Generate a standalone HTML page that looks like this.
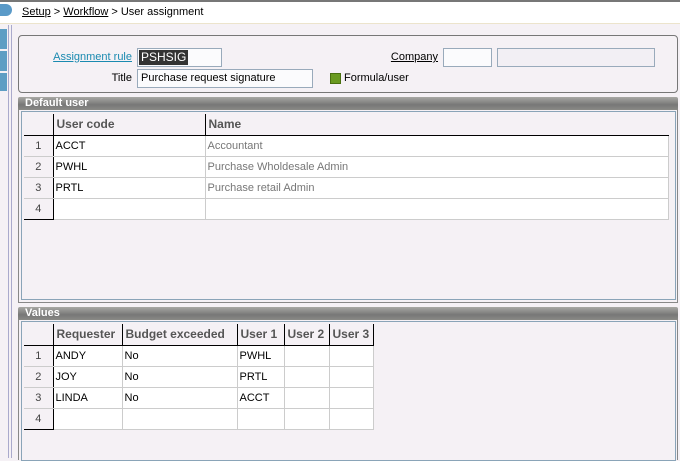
<!DOCTYPE html>
<html><head><style>
*{margin:0;padding:0;box-sizing:border-box}
body{width:680px;height:458px;overflow:hidden;background:#f5f1f5;font-family:"Liberation Sans",sans-serif;font-size:11px;color:#000;position:relative}
.a{position:absolute}
.top{left:0;top:0;width:680px;height:24px;background:#fff;border-top:2px solid #777;border-bottom:1px solid #ece4cc}
.u{text-decoration:underline}
.inp{position:absolute;background:#fbfbfd;border:1px solid #9ab;height:19px}
.bar{position:absolute;left:18px;width:660px;height:13px;background:linear-gradient(#a8a8a4,#777 60%,#8a8a86);color:#fff;font-weight:bold;font-size:11px;line-height:13px;padding-left:7px;border-radius:2px 2px 0 0}
.panel{position:absolute;left:18px;width:660px;border:1px solid #888;border-top:none}
.inner{position:absolute;border:1px solid #8aa4b8}
table{position:absolute;border-collapse:collapse;font-size:11px;table-layout:fixed}
td,th{height:21px;border:1px solid #ccc;padding:0 2px;text-align:left;background:#fff;white-space:nowrap;overflow:hidden}
th{background:#f5f1f5;color:#555;font-weight:bold;font-size:12px;border:none;border-left:1px solid #000;border-bottom:1px solid #000;padding-left:3px}
th:first-child{border-left:none}
td.n{background:#f5f1f5;text-align:center;color:#444;border:none;border-right:1px solid #000;border-bottom:1px solid #ccc}
tr:last-child td.n{border-bottom:1px solid #000}
.g{color:#777}
.r{text-align:right}
</style></head><body>
<div class="a top"></div>
<div class="a" style="left:0;top:4px;width:12px;height:12px;background:#5a9ac8;border-radius:0 6px 6px 0"></div>
<div class="a" style="left:22px;top:6px;font-size:11px"><span class="u">Setup</span> &gt; <span class="u">Workflow</span> &gt; User assignment</div>
<div class="a" style="left:0;top:29px;width:7px;height:20px;background:#5e9ec4"></div>
<div class="a" style="left:0;top:51px;width:7px;height:20px;background:#5e9ec4"></div>
<div class="a" style="left:0;top:73px;width:7px;height:18px;background:#5e9ec4"></div>
<div class="a" style="left:8px;top:25px;width:1px;height:433px;background:#aac"></div>
<div class="a" style="left:11px;top:25px;width:1px;height:433px;background:#aac"></div>

<div class="a" style="left:18px;top:35px;width:660px;height:58px;border:1px solid #777;border-radius:4px"></div>
<div class="a u r" style="left:30px;width:102px;top:51px;color:#1a8ab0">Assignment rule</div>
<div class="inp" style="left:137px;top:48px;width:85px"><span style="background:#333;color:#fff;margin:1px 0 0 1px;display:inline-block;padding:0 2px;line-height:15px;font-size:12px">PSHSIG</span></div>
<div class="a r" style="left:80px;width:52px;top:72px">Title</div>
<div class="inp" style="left:137px;top:69px;width:176px;padding-left:3px;line-height:17px">Purchase request signature</div>
<div class="a" style="left:330px;top:73px;width:11px;height:11px;background:#6a9a20;border:1px solid #4a7010"></div>
<div class="a" style="left:344px;top:72px">Formula/user</div>
<div class="a u r" style="left:360px;width:78px;top:51px">Company</div>
<div class="inp" style="left:443px;top:48px;width:49px"></div>
<div class="inp" style="left:497px;top:48px;width:158px;background:#f2eff4"></div>

<div class="bar" style="top:97px">Default user</div>
<div class="panel" style="top:110px;height:193px"></div>
<div class="inner" style="left:21px;top:111px;width:655px;height:189px"></div>
<table style="left:24px;top:114px;width:644px">
<col style="width:29px"><col style="width:152px"><col style="width:463px">
<tr><th></th><th>User code</th><th>Name</th></tr>
<tr><td class="n">1</td><td>ACCT</td><td class="g">Accountant</td></tr>
<tr><td class="n">2</td><td>PWHL</td><td class="g">Purchase Wholdesale Admin</td></tr>
<tr><td class="n">3</td><td>PRTL</td><td class="g">Purchase retail Admin</td></tr>
<tr><td class="n">4</td><td></td><td></td></tr>
</table>

<div class="bar" style="top:307px">Values</div>
<div class="panel" style="top:320px;height:140px;border-bottom:none"></div>
<div class="inner" style="left:21px;top:321px;width:655px;height:140px"></div>
<table style="left:24px;top:324px;width:349px">
<col style="width:29px"><col style="width:69px"><col style="width:115px"><col style="width:47px"><col style="width:45px"><col style="width:44px">
<tr><th></th><th>Requester</th><th>Budget exceeded</th><th>User 1</th><th>User 2</th><th style="border-right:1px solid #000">User 3</th></tr>
<tr><td class="n">1</td><td>ANDY</td><td>No</td><td>PWHL</td><td></td><td></td></tr>
<tr><td class="n">2</td><td>JOY</td><td>No</td><td>PRTL</td><td></td><td></td></tr>
<tr><td class="n">3</td><td>LINDA</td><td>No</td><td>ACCT</td><td></td><td></td></tr>
<tr><td class="n">4</td><td></td><td></td><td></td><td></td><td></td></tr>
</table>
</body></html>
